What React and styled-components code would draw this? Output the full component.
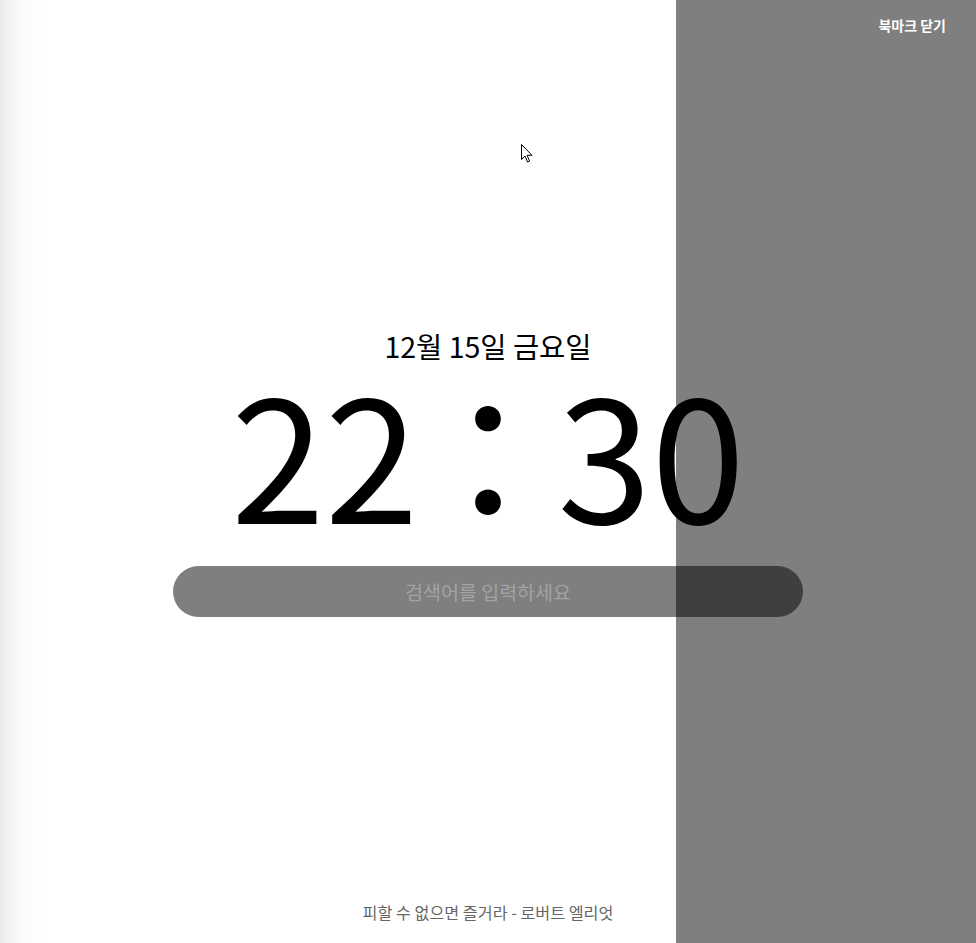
import React from "react";
import styled, { createGlobalStyle } from "styled-components";

const GlobalStyle = createGlobalStyle`
  html, body {
    margin: 0;
    padding: 0;
    height: 100%;
    overflow: hidden;
  }
  body {
    font-family: "Noto Sans CJK KR", "Noto Sans", sans-serif;
    background: #fff;
  }
  #root {
    height: 100%;
  }
`;

function App() {
  return (
    <>
      <GlobalStyle />
      <Page>
        <Main>
          <Clock>
            <DateText>12월 15일 금요일</DateText>
            <Time>
              22<Colon>：</Colon>30
            </Time>
          </Clock>
          <SearchBar placeholder="검색어를 입력하세요" />
        </Main>
        <Quote>피할 수 없으면 즐거라 - 로버트 엘리엇</Quote>
        <Bookmark>
          <CloseButton>북마크 닫기</CloseButton>
        </Bookmark>
        <Cursor viewBox="0 0 12 19" width="12" height="19">
          <path
            d="M0.5 0.5 L0.5 15.5 L4 12 L6.6 18 L8.6 17.1 L6.1 11.3 L11 11.3 Z"
            fill="#fff"
            stroke="#000"
            strokeWidth="1"
            strokeLinejoin="miter"
          />
        </Cursor>
      </Page>
    </>
  );
}

const Page = styled.div`
  position: relative;
  height: 100%;
  display: flex;
  flex-direction: column;
  align-items: center;
  background: linear-gradient(
    to right,
    #e9e9e9 0px,
    #f5f5f5 12px,
    #fbfbfb 24px,
    #fff 42px
  );
  overflow: hidden;
`;

const Main = styled.div`
  flex: 1;
  display: flex;
  flex-direction: column;
  align-items: center;
  padding-top: 326px;
`;

const Clock = styled.div`
  display: flex;
  flex-direction: column;
  align-items: center;
  color: #000;
`;

const DateText = styled.div`
  font-size: 28.5px;
  line-height: 40px;
`;

const Time = styled.div`
  font-size: 169px;
  line-height: 170px;
  white-space: pre;
`;

const Colon = styled.span`
  margin: 0 -15px;
`;

const SearchBar = styled.input`
  width: 630px;
  height: 51px;
  box-sizing: border-box;
  margin-top: 30px;
  border: none;
  outline: none;
  border-radius: 26px;
  background: rgba(0, 0, 0, 0.5);
  text-align: center;
  font-family: inherit;
  font-size: 19.5px;
  color: #fff;
  position: relative;
  z-index: 2;
  &::placeholder {
    color: #a3a3a3;
  }
`;

const Quote = styled.div`
  font-size: 16.2px;
  color: #666;
  padding-bottom: 19px;
`;

const Bookmark = styled.aside`
  position: absolute;
  top: 0;
  right: 0;
  width: 300px;
  height: 100%;
  background: rgba(0, 0, 0, 0.5);
  display: flex;
  justify-content: flex-end;
  align-items: flex-start;
  z-index: 1;
`;

const CloseButton = styled.button`
  margin: 15px 30px 0 0;
  padding: 0;
  border: none;
  background: none;
  color: #fff;
  font-family: inherit;
  font-size: 14px;
  font-weight: 700;
  cursor: pointer;
`;

const Cursor = styled.svg`
  position: absolute;
  left: 521px;
  top: 144px;
  z-index: 3;
`;

export default App;
